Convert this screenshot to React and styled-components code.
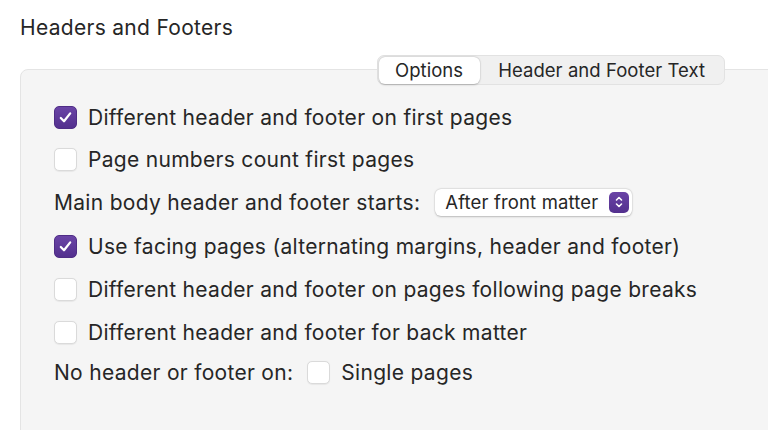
import React from "react";
import styled, { createGlobalStyle } from "styled-components";

const Global = createGlobalStyle`
  html, body {
    margin: 0;
    padding: 0;
    background: #ffffff;
    overflow: hidden;
  }
  body {
    font-family: Inter, "Liberation Sans", Arial, sans-serif;
    color: #262626;
  }
`;

const Page = styled.div`
  width: 768px;
  height: 430px;
  padding: 13px 0 0 20px;
  box-sizing: border-box;
  overflow: hidden;
`;

const Title = styled.h1`
  margin: 0;
  font-size: 21px;
  letter-spacing: 0.3px;
  font-weight: 400;
  line-height: 30px;
  color: #262626;
`;

const Panel = styled.div`
  position: relative;
  margin-top: 26px;
  width: 780px;
  height: 400px;
  background: #f5f5f5;
  border: 1px solid #e4e4e4;
  border-radius: 8px;
  padding: 26px 0 0 33px;
  box-sizing: border-box;
`;

const Tabs = styled.div`
  position: absolute;
  top: -15px;
  left: 356px;
  display: flex;
  align-items: center;
  height: 30px;
  padding: 0 1px;
  box-sizing: border-box;
  background: #f0f0f0;
  border: 1px solid #e2e2e2;
  border-radius: 7px;
`;

const Tab = styled.div`
  height: 27px;
  display: flex;
  align-items: center;
  padding: ${(p) => (p.$active ? "0 17px 0 16px" : "0 18px 0 18px")};
  font-size: 18.5px;
  letter-spacing: 0.05px;
  color: #262626;
  border-radius: 6px;
  background: ${(p) => (p.$active ? "#ffffff" : "transparent")};
  box-shadow: ${(p) =>
    p.$active ? "0 0.5px 2px rgba(0,0,0,0.22), 0 0 0 0.5px rgba(0,0,0,0.06)" : "none"};
`;

const List = styled.div`
  display: flex;
  flex-direction: column;
`;

const Row = styled.div`
  display: flex;
  align-items: center;
  height: ${(p) => p.$h || 42}px;
  font-size: 21px;
  letter-spacing: 0.3px;
  gap: ${(p) => p.$gap || 11}px;
`;

const Box = styled.span`
  width: 23px;
  height: 23px;
  flex: none;
  box-sizing: border-box;
  border-radius: 5px;
  display: flex;
  align-items: center;
  justify-content: center;
  background: ${(p) =>
    p.$on ? "linear-gradient(#6a44a6, #53308e)" : "#ffffff"};
  border: 1px solid ${(p) => (p.$on ? "#4f2d86" : "#dadada")};
  box-shadow: ${(p) => (p.$on ? "none" : "0 0.5px 1px rgba(0,0,0,0.06)")};
  margin-left: ${(p) => p.$ml || 0}px;
`;

const Select = styled.div`
  display: flex;
  align-items: center;
  justify-content: space-between;
  width: 197px;
  height: 27px;
  box-sizing: border-box;
  margin-left: 4px;
  padding: 0 3px 0 10px;
  background: #ffffff;
  border-radius: 6px;
  box-shadow: 0 0.5px 2px rgba(0, 0, 0, 0.22), 0 0 0 0.5px rgba(0, 0, 0, 0.06);
  font-size: 18.5px;
  letter-spacing: 0.15px;
`;

const Stepper = styled.span`
  width: 20px;
  height: 21px;
  border-radius: 5px;
  background: linear-gradient(#6a44a6, #53308e);
  display: flex;
  align-items: center;
  justify-content: center;
`;

const Check = ({ on, ml }) => (
  <Box $on={on} $ml={ml}>
    {on && (
      <svg width="15" height="15" viewBox="0 0 16 16">
        <path
          d="M3 8.6 L6.4 12 L13 3.6"
          fill="none"
          stroke="#fff"
          strokeWidth="2.4"
          strokeLinecap="round"
          strokeLinejoin="round"
        />
      </svg>
    )}
  </Box>
);

export default function App() {
  return (
    <Page>
      <Global />
      <Title>Headers and Footers</Title>
      <Panel>
        <Tabs>
          <Tab $active>Options</Tab>
          <Tab>Header and Footer Text</Tab>
        </Tabs>
        <List>
          <Row>
            <Check on />
            Different header and footer on first pages
          </Row>
          <Row>
            <Check />
            Page numbers count first pages
          </Row>
          <Row $h={44}>
            Main body header and footer starts:
            <Select>
              After front matter
              <Stepper>
                <svg width="10" height="14" viewBox="0 0 10 14">
                  <path
                    d="M2.5 5 L5 2.5 L7.5 5 M2.5 9 L5 11.5 L7.5 9"
                    fill="none"
                    stroke="#fff"
                    strokeWidth="1.6"
                    strokeLinecap="round"
                    strokeLinejoin="round"
                  />
                </svg>
              </Stepper>
            </Select>
          </Row>
          <Row $h={44}>
            <Check on />
            Use facing pages (alternating margins, header and footer)
          </Row>
          <Row $h={43}>
            <Check />
            Different header and footer on pages following page breaks
          </Row>
          <Row $h={42}>
            <Check />
            Different header and footer for back matter
          </Row>
          <Row $h={38}>
            No header or footer on:
            <Check ml={3} />
            Single pages
          </Row>
        </List>
      </Panel>
    </Page>
  );
}
